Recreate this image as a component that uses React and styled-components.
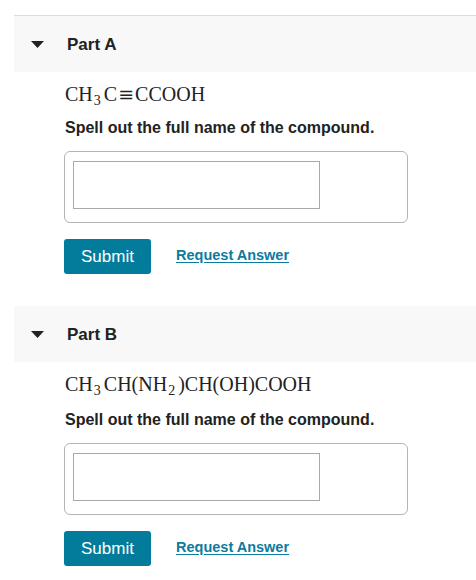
import React from "react";
import styled, { createGlobalStyle } from "styled-components";

const Global = createGlobalStyle`
  html, body { margin: 0; padding: 0; background: #fff; }
  body { font-family: "Liberation Sans", Arial, sans-serif; color: #222; }
`;

const Page = styled.div`
  padding-top: 15px;
  width: 476px;
  overflow: hidden;
`;

const Part = styled.section`
  margin-bottom: 32px;
`;

const Header = styled.div`
  margin-left: 14px;
  height: ${(p) => (p.$first ? "57px" : "56px")};
  box-sizing: border-box;
  display: flex;
  align-items: center;
  padding-left: 17px;
  background: #f8f8f8;
  border-top: ${(p) => (p.$first ? "1px solid #dcdcdc" : "none")};
`;

const Caret = styled.svg`
  width: 13px;
  height: 7px;
  flex: none;
  margin-top: 1px;
`;

const Title = styled.h2`
  margin: 2px 0 0 23px;
  font-family: "Liberation Sans", Arial, sans-serif;
  font-weight: 700;
  font-size: 17px;
  color: #222;
  line-height: 20px;
`;

const Body = styled.div`
  padding-left: 64px;
`;

const Formula = styled.div`
  margin-top: 10px;
  font-family: "Liberation Serif", "Times New Roman", serif;
  font-size: 20px;
  line-height: 24px;
  height: ${(p) => (p.$tall ? "26px" : "24px")};
  color: #222;
  padding-left: 1px;
  white-space: nowrap;
`;

const Sub = styled.span`
  font-size: 14px;
  vertical-align: -4px;
  margin-right: 3px;
  margin-left: 1px;
`;

const Rel = styled.span`
  font-family: "DejaVu Serif", serif;
  font-size: 19px;
  margin: 0 1px;
`;

const Prompt = styled.p`
  margin: 12px 0 0;
  padding-left: 1px;
  font-family: "Liberation Sans", Arial, sans-serif;
  font-weight: 700;
  font-size: 16px;
  line-height: 20px;
  color: #222;
`;

const AnswerBox = styled.div`
  margin-top: 13px;
  width: 344px;
  height: 72px;
  box-sizing: border-box;
  border: 1px solid #b4b4b4;
  border-radius: 6px;
  padding: 9px 0 0 8px;
`;

const TextInput = styled.input`
  display: block;
  width: 247px;
  height: 48px;
  box-sizing: border-box;
  border: 1px solid #a9a9a9;
  border-radius: 0;
  margin: 0;
  padding: 0 6px;
  font-family: "Liberation Sans", Arial, sans-serif;
  font-size: 16px;
  background: #fff;
  outline: none;
`;

const Actions = styled.div`
  margin-top: 16px;
  display: flex;
  align-items: center;
  gap: 25px;
`;

const SubmitButton = styled.button`
  width: 87px;
  height: 35px;
  border: none;
  border-radius: 3px;
  background: #037c9c;
  color: #fff;
  font-family: "Liberation Sans", Arial, sans-serif;
  font-size: 17px;
  padding: 0;
  cursor: pointer;
`;

const LinkButton = styled.a`
  font-family: "Liberation Sans", Arial, sans-serif;
  font-weight: 700;
  font-size: 14.5px;
  color: #0b7ba0;
  text-decoration: underline;
  text-underline-offset: 2px;
  margin-top: -3px;
  cursor: pointer;
`;

const CaretIcon = () => (
  <Caret viewBox="0 0 13 7">
    <polygon points="0,0 13,0 6.5,7" fill="#222" />
  </Caret>
);

function Question({ title, first, tall, formula }) {
  return (
    <Part>
      <Header $first={first}>
        <CaretIcon />
        <Title>{title}</Title>
      </Header>
      <Body>
        <Formula $tall={tall}>{formula}</Formula>
        <Prompt>Spell out the full name of the compound.</Prompt>
        <AnswerBox>
          <TextInput type="text" aria-label="answer" />
        </AnswerBox>
        <Actions>
          <SubmitButton>Submit</SubmitButton>
          <LinkButton>Request Answer</LinkButton>
        </Actions>
      </Body>
    </Part>
  );
}

export default function App() {
  return (
    <>
      <Global />
      <Page>
        <Question
          title="Part A"
          first
          formula={
            <>
              CH<Sub>3</Sub>C<Rel>≡</Rel>CCOOH
            </>
          }
        />
        <Question
          title="Part B"
          tall
          formula={
            <>
              CH<Sub>3</Sub>CH(NH<Sub>2</Sub>)CH(OH)COOH
            </>
          }
        />
      </Page>
    </>
  );
}
